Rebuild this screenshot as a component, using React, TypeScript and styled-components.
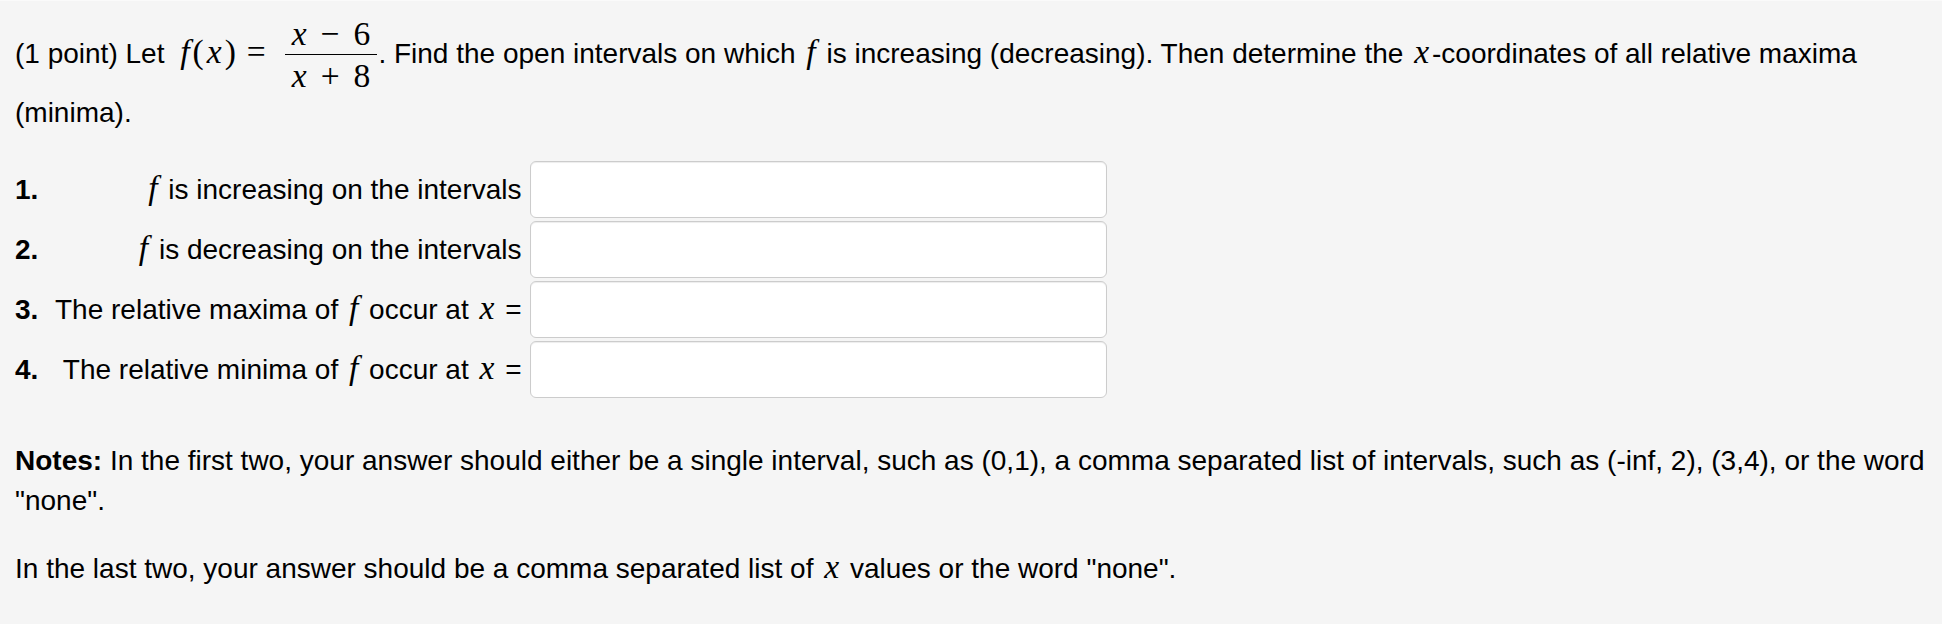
import React from "react";
import styled, { createGlobalStyle } from "styled-components";

const GlobalStyle = createGlobalStyle`
  html, body {
    margin: 0;
    padding: 0;
    background: #f5f5f5;
  }
  body {
    font-family: "Liberation Sans", Arial, sans-serif;
    font-size: 28px;
    line-height: 40px;
    color: #000;
  }
`;

const Page = styled.div`
  padding: 16px 8px 0 15px;
  border-top: 1px solid #fafafa;
`;

const Para = styled.p`
  margin: 0 0 28px;
`;

// math pieces, TeX-like serif
const Var = styled.span<{ $lead?: number }>`
  font-family: "Liberation Serif", "DejaVu Serif", serif;
  font-style: italic;
  font-size: 1.2em;
  line-height: 0;
  margin: 0 3px 0 ${(p) => 3 + (p.$lead ?? 0)}px;
`;

const Sym = styled.span<{ $space?: number }>`
  font-family: "Liberation Serif", "DejaVu Serif", serif;
  font-size: 1.2em;
  line-height: 0;
  margin: 0 ${(p) => p.$space ?? 0}px;
`;

const Frac = styled.span`
  display: inline-flex;
  flex-direction: column;
  vertical-align: 18px;
  margin: 0 1px 0 8px;
  font-family: "Liberation Serif", "DejaVu Serif", serif;
  font-size: 1.2em;
`;

const FracPart = styled.span<{ $bottom?: boolean }>`
  display: block;
  text-align: center;
  line-height: 34px;
  padding: ${(p) => (p.$bottom ? "4px 7px 0" : "0 7px 3px")};
  border-bottom: ${(p) => (p.$bottom ? "none" : "1.5px solid #000")};
  white-space: nowrap;
  i {
    font-style: italic;
  }
  b {
    font-weight: normal;
    margin: 0 14px;
  }
`;

const Questions = styled.div`
  display: grid;
  grid-template-columns: 32px max-content 577px;
  column-gap: 8px;
  row-gap: 3px;
  align-items: center;
  margin: 0 0 43px;
`;

const Num = styled.span`
  font-weight: bold;
`;

const Label = styled.span`
  text-align: right;
  white-space: nowrap;
`;

const Answer = styled.input`
  box-sizing: border-box;
  height: 57px;
  width: 100%;
  margin: 0;
  border: 1px solid #ccc;
  border-radius: 6px;
  background: #fff;
  box-shadow: inset 0 1px 1px rgba(0, 0, 0, 0.075);
  font-size: 28px;
  padding: 4px 8px;
  outline: none;
`;

const rows = [
  { n: "1.", label: <><Var>f</Var> is increasing on the intervals</> },
  { n: "2.", label: <><Var>f</Var> is decreasing on the intervals</> },
  { n: "3.", label: <>The relative maxima of <Var>f</Var> occur at <Var>x</Var> =</> },
  { n: "4.", label: <>The relative minima of <Var>f</Var> occur at <Var>x</Var> =</> },
];

export default function App() {
  return (
    <Page>
      <GlobalStyle />
      <Para>
        (1 point) Let <Var $lead={5}>f</Var>
        <Sym>(</Sym>
        <Var>x</Var>
        <Sym>)</Sym>
        <Sym $space={11}>=</Sym>
        <Frac>
          <FracPart>
            <i>x</i>
            <b>−</b>6
          </FracPart>
          <FracPart $bottom>
            <i>x</i>
            <b>+</b>8
          </FracPart>
        </Frac>
        . Find the open intervals on which <Var>f</Var> is increasing (decreasing). Then
        determine the <Var>x</Var>-coordinates of all relative maxima (minima).
      </Para>
      <Questions>
        {rows.map((r) => (
          <React.Fragment key={r.n}>
            <Num>{r.n}</Num>
            <Label>{r.label}</Label>
            <Answer type="text" />
          </React.Fragment>
        ))}
      </Questions>
      <Para>
        <b>Notes:</b> In the first two, your answer should either be a single interval, such
        as (0,1), a comma separated list of intervals, such as (-inf, 2), (3,4), or the word
        "none".
      </Para>
      <Para>
        In the last two, your answer should be a comma separated list of <Var>x</Var> values or
        the word "none".
      </Para>
    </Page>
  );
}
